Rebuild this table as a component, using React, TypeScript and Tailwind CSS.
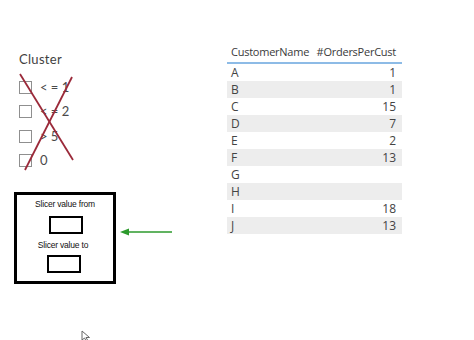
import React from "react";

const rows: [string, string][] = [
  ["A", "1"],
  ["B", "1"],
  ["C", "15"],
  ["D", "7"],
  ["E", "2"],
  ["F", "13"],
  ["G", ""],
  ["H", ""],
  ["I", "18"],
  ["J", "13"],
];

const options = ["< = 1", "< = 2", "> 5", "0"];

function Checkbox({ label }: { label: string }) {
  return (
    <div className="flex items-center h-[24.5px]">
      <div className="w-[13px] h-[13px] border border-[#8f8f8f] bg-white" />
      <span className="ml-[8px] text-[13px] text-[#4a4a4a] leading-none">{label}</span>
    </div>
  );
}

export default function App() {
  return (
    <div className="relative w-[474px] h-[340px] bg-white overflow-hidden">
      <div className="flex">
        {/* left: cluster slicer + slicer box */}
        <div className="w-[208px] pl-[19px] pt-[53px]" style={{ fontFamily: "Lato, 'Noto Sans', sans-serif" }}>
          <div className="text-[13px] text-[#3f3f3f] leading-none tracking-[0.3px]">Cluster</div>
          <div className="mt-[9px]">
            {options.map((o) => (
              <Checkbox key={o} label={o} />
            ))}
          </div>

          <div className="flex items-center mt-[19px] -ml-[5px]">
            <div
              className="w-[102px] h-[92px] border-[3px] border-black flex flex-col items-center pt-[5px]"
              style={{ fontFamily: "'Liberation Sans', Arial, sans-serif" }}
            >
              <div className="text-[8.5px] leading-none text-[#111] tracking-[-0.2px]">Slicer value from</div>
              <div className="w-[34px] h-[18px] border-2 border-black mt-[7px] ml-[2px]" />
              <div className="text-[8.5px] leading-none text-[#111] tracking-[-0.2px] mt-[7px] -ml-[4px]">
                Slicer value to
              </div>
              <div className="w-[34px] h-[18px] border-2 border-black mt-[6px] -ml-[2px]" />
            </div>
            {/* green arrow */}
            <svg width="56" height="10" className="ml-[4px] -mt-[12px]" viewBox="0 0 56 10">
              <line x1="6" y1="5" x2="52" y2="5" stroke="#2c9a2c" strokeWidth="1.5" />
              <polygon points="0,5 9,1.5 9,8.5" fill="#2c9a2c" />
            </svg>
          </div>
        </div>

        {/* right: table */}
        <div className="ml-[19px] pt-[42px] w-[175px]" style={{ fontFamily: "'Open Sans', 'Noto Sans', sans-serif" }}>
          <div className="flex items-center h-[22px] border-b-2 border-[#8dbbe6] text-[11px] text-[#3a3a3a] tracking-[-0.25px]">
            <div className="flex-1 pl-[4px]">CustomerName</div>
            <div className="pr-[6px]">#OrdersPerCust</div>
          </div>
          {rows.map(([n, v], i) => (
            <div
              key={n}
              className={`flex items-center h-[17px] text-[12px] text-[#444] leading-none ${
                i % 2 === 1 ? "bg-[#ededed]" : "bg-white"
              }`}
            >
              <div className="flex-1 pl-[4px]">{n}</div>
              <div className="pr-[6px]">{v}</div>
            </div>
          ))}
        </div>
      </div>

      {/* red cross over the cluster slicer */}
      <svg className="absolute left-0 top-0 pointer-events-none" width="474" height="340">
        <line x1="20" y1="74" x2="73" y2="160" stroke="#9b2a3a" strokeWidth="1.8" />
        <line x1="72" y1="77" x2="25" y2="170" stroke="#9b2a3a" strokeWidth="1.8" />
      </svg>

      {/* mouse cursor */}
      <svg className="absolute left-[81px] top-[330px]" width="10" height="12" viewBox="0 0 10 12">
        <path d="M1 1 L1 10 L3.5 8 L5.5 11.5 L7 10.8 L5 7.5 L8.5 7.5 Z" fill="#fff" stroke="#666" strokeWidth="1" />
      </svg>
    </div>
  );
}
